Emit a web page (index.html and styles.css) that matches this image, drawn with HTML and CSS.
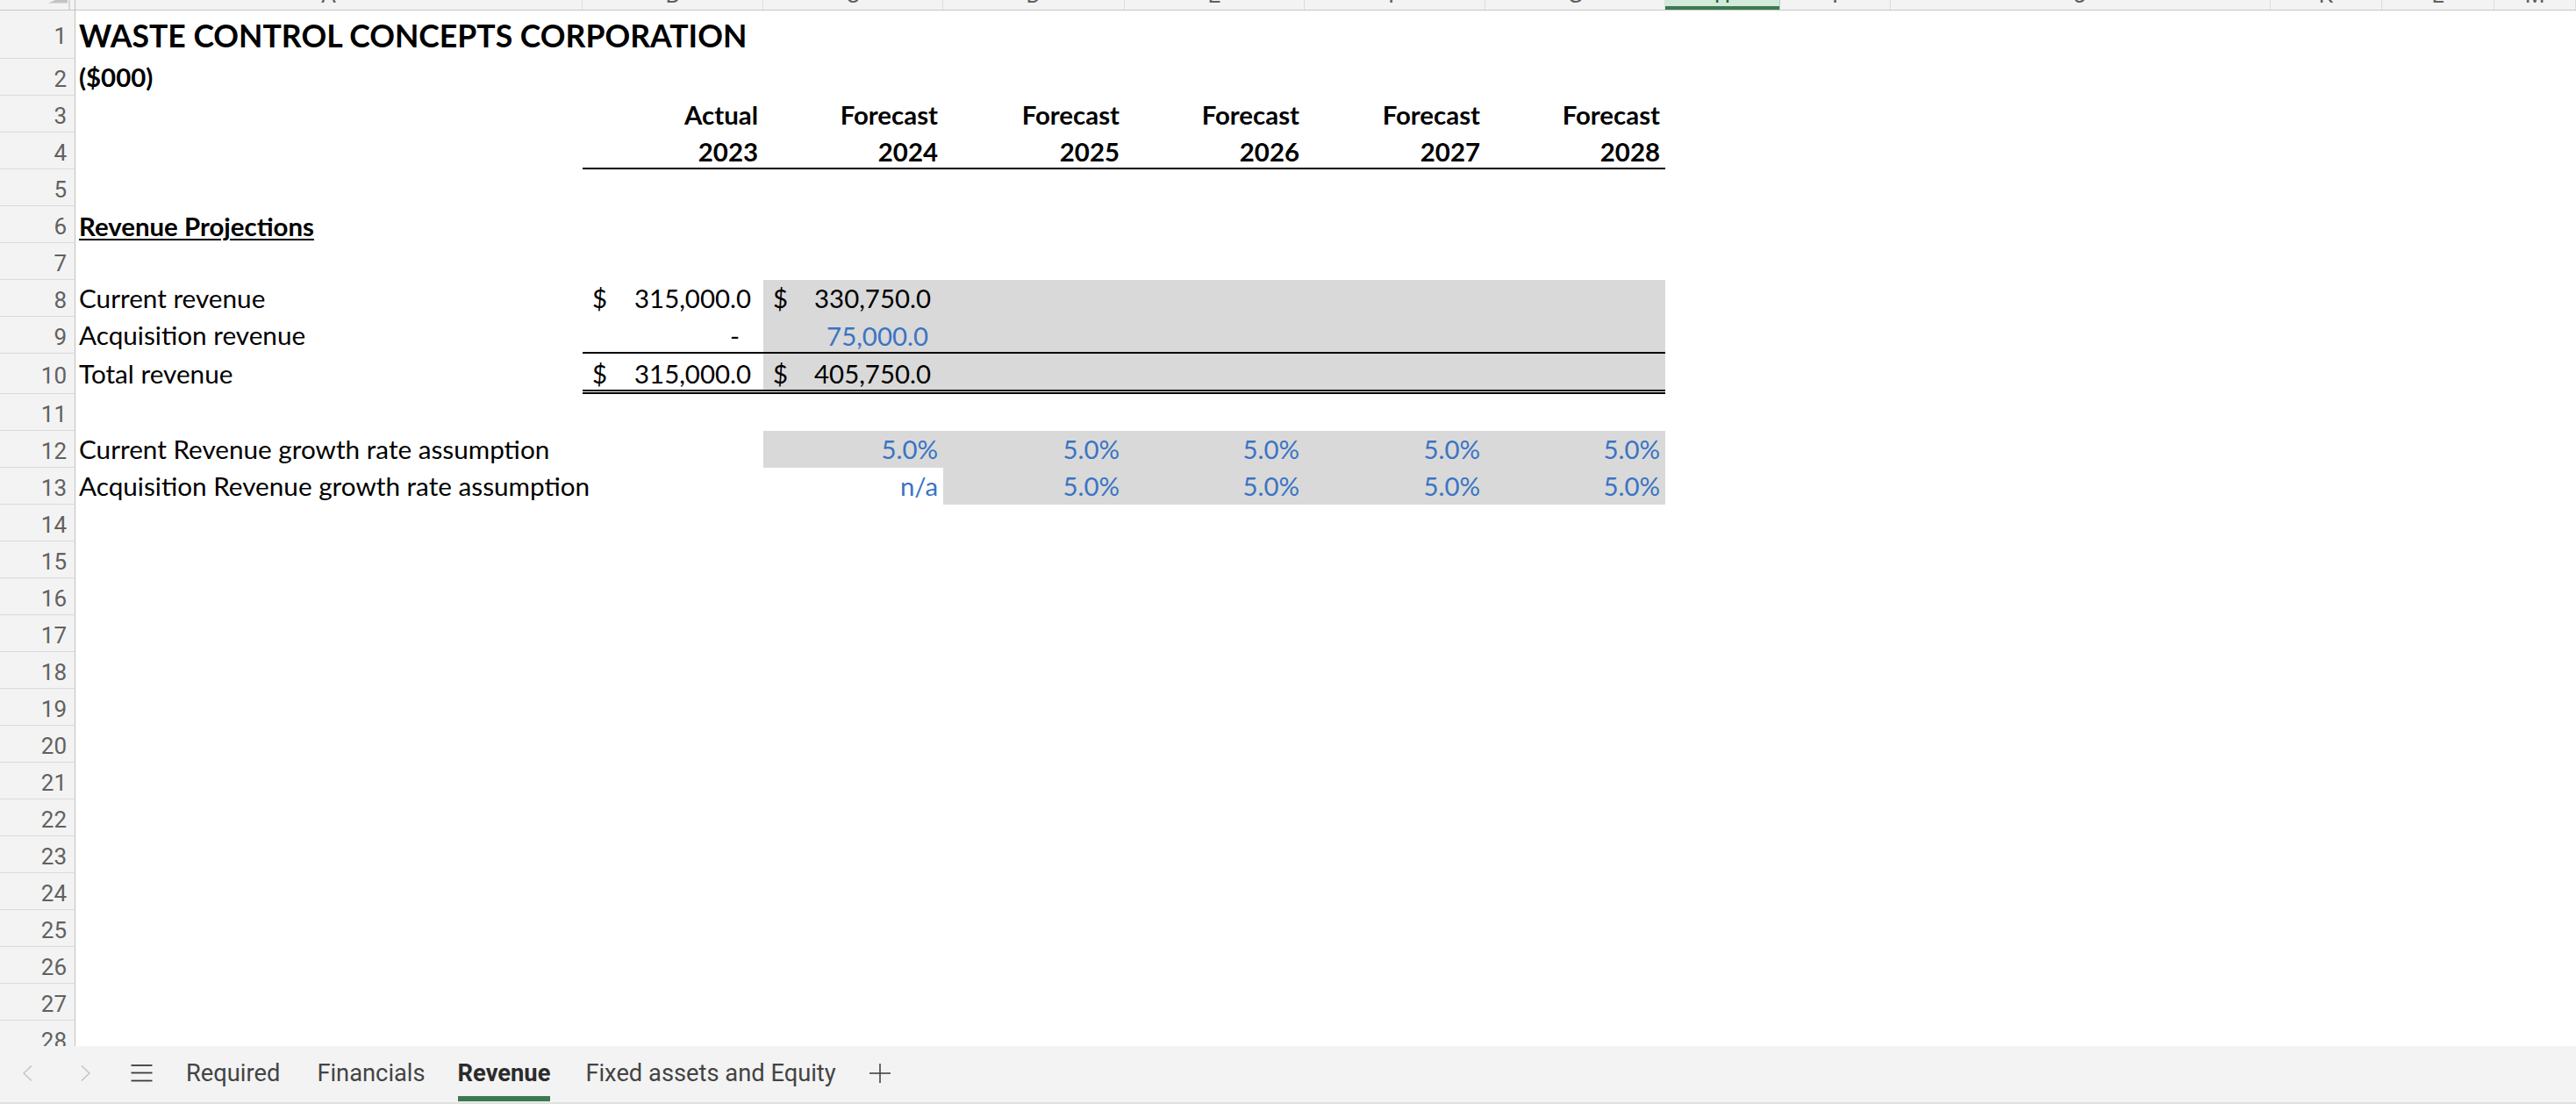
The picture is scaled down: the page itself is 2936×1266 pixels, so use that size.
FILE: index.html
```html
<!DOCTYPE html>
<html>
<head>
<meta charset="utf-8">
<title>Revenue</title>
<link rel="stylesheet" href="styles.css">
</head>
<body>
<div class="app">
  <div class="colhdr">
    <div class="corner"><svg width="86" height="11" viewBox="0 0 86 11"><polygon points="63,0 77,0 77,3.5 55,3.5" fill="#c4c4c4"/><rect x="78" y="0" width="2" height="11" fill="#d6d6d6"/></svg></div>
    <div class="h"><span>A</span></div>
    <div class="h"><span>B</span></div>
    <div class="h"><span>C</span></div>
    <div class="h"><span>D</span></div>
    <div class="h"><span>E</span></div>
    <div class="h"><span>F</span></div>
    <div class="h"><span>G</span></div>
    <div class="h sel"><span>H</span></div>
    <div class="h"><span>I</span></div>
    <div class="h"><span>J</span></div>
    <div class="h"><span>K</span></div>
    <div class="h"><span>L</span></div>
    <div class="h"><span>M</span></div>
  </div>

  <div class="sheet">
    <div class="row h55"><div class="rh">1</div><div class="c title">WASTE CONTROL CONCEPTS CORPORATION</div></div>
    <div class="row"><div class="rh">2</div><div class="c bold">($000)</div></div>
    <div class="row"><div class="rh">3</div><div class="c"></div>
      <div class="c r bold hd">Actual</div><div class="c r bold hd">Forecast</div><div class="c r bold hd">Forecast</div><div class="c r bold hd">Forecast</div><div class="c r bold hd">Forecast</div><div class="c r bold hd">Forecast</div></div>
    <div class="row"><div class="rh">4</div><div class="c"></div>
      <div class="c r bold ul2">2023</div><div class="c r bold ul2">2024</div><div class="c r bold ul2">2025</div><div class="c r bold ul2">2026</div><div class="c r bold ul2">2027</div><div class="c r bold ul2">2028</div></div>
    <div class="row"><div class="rh">5</div></div>
    <div class="row"><div class="rh">6</div><div class="c bold under">Revenue Projections</div></div>
    <div class="row"><div class="rh">7</div></div>
    <div class="row"><div class="rh">8</div><div class="c">Current revenue</div>
      <div class="c acct"><span>$</span><span>315,000.0</span></div>
      <div class="c acct fill"><span>$</span><span>330,750.0</span></div>
      <div class="c fill"></div><div class="c fill"></div><div class="c fill"></div><div class="c fill"></div></div>
    <div class="row"><div class="rh">9</div><div class="c">Acquisition revenue</div>
      <div class="c r ul2 dash">-</div>
      <div class="c r ul2 fill blue inp">75,000.0</div>
      <div class="c ul2 fill"></div><div class="c ul2 fill"></div><div class="c ul2 fill"></div><div class="c ul2 fill"></div></div>
    <div class="row h46"><div class="rh">10</div><div class="c tot">Total revenue</div>
      <div class="c acct dbl"><span>$</span><span>315,000.0</span></div>
      <div class="c acct dbl fill"><span>$</span><span>405,750.0</span></div>
      <div class="c dbl fill"></div><div class="c dbl fill"></div><div class="c dbl fill"></div><div class="c dbl fill"></div></div>
    <div class="row"><div class="rh">11</div></div>
    <div class="row"><div class="rh">12</div><div class="c lo">Current Revenue growth rate assumption</div><div class="c"></div>
      <div class="c r lo fill blue">5.0%</div><div class="c r lo fill blue">5.0%</div><div class="c r lo fill blue">5.0%</div><div class="c r lo fill blue">5.0%</div><div class="c r lo fill blue">5.0%</div></div>
    <div class="row"><div class="rh">13</div><div class="c lo">Acquisition Revenue growth rate assumption</div><div class="c"></div>
      <div class="c r lo blue">n/a</div><div class="c r lo fill blue">5.0%</div><div class="c r lo fill blue">5.0%</div><div class="c r lo fill blue">5.0%</div><div class="c r lo fill blue">5.0%</div></div>
    <div class="row"><div class="rh">14</div></div>
    <div class="row"><div class="rh">15</div></div>
    <div class="row"><div class="rh">16</div></div>
    <div class="row"><div class="rh">17</div></div>
    <div class="row"><div class="rh">18</div></div>
    <div class="row"><div class="rh">19</div></div>
    <div class="row"><div class="rh">20</div></div>
    <div class="row"><div class="rh">21</div></div>
    <div class="row"><div class="rh">22</div></div>
    <div class="row"><div class="rh">23</div></div>
    <div class="row"><div class="rh">24</div></div>
    <div class="row"><div class="rh">25</div></div>
    <div class="row"><div class="rh">26</div></div>
    <div class="row"><div class="rh">27</div></div>
    <div class="row"><div class="rh">28</div></div>
  </div>

  <div class="tabbar">
    <svg class="chev" width="11" height="18" viewBox="0 0 11 18"><polyline points="10,0.5 1,9 10,17.5" fill="none" stroke="#c2c2c2" stroke-width="1.4"/></svg>
    <svg class="chev next" width="11" height="18" viewBox="0 0 11 18"><polyline points="1,0.5 10,9 1,17.5" fill="none" stroke="#c2c2c2" stroke-width="1.4"/></svg>
    <svg class="menu" width="25" height="20" viewBox="0 0 25 20"><line x1="0.5" y1="1" x2="24.5" y2="1" stroke="#3a3a3a" stroke-width="1.8"/><line x1="0.5" y1="9.5" x2="24.5" y2="9.5" stroke="#3a3a3a" stroke-width="1.8"/><line x1="0.5" y1="18.5" x2="24.5" y2="18.5" stroke="#3a3a3a" stroke-width="1.8"/></svg>
    <div class="tab">Required</div>
    <div class="tab">Financials</div>
    <div class="tab active">Revenue</div>
    <div class="tab">Fixed assets and Equity</div>
    <svg class="plus" width="26" height="24" viewBox="0 0 26 24"><line x1="13" y1="1" x2="13" y2="23" stroke="#444" stroke-width="1.6"/><line x1="1" y1="12" x2="25" y2="12" stroke="#444" stroke-width="1.6"/></svg>
  </div>
</div>
</body>
</html>
```

FILE: styles.css
```css
* { box-sizing: border-box; }
html, body { margin: 0; padding: 0; }
body {
  width: 2936px;
  height: 1266px;
  overflow: hidden;
  background: #ffffff;
  font-family: Lato, "Liberation Sans", sans-serif;
}
.app { width: 2936px; height: 1266px; display: flex; flex-direction: column; }

/* column header strip (mostly scrolled out of view) */
.colhdr {
  display: grid;
  grid-template-columns: 86px 578px 206px 205px 207px 205px 206px 205px 131px 126px 433px 127px 128px 1fr;
  height: 12px;
  flex: none;
  background: #f3f3f3;
  border-bottom: 1px solid #c6c6c6;
}
.corner { overflow: hidden; border-right: 1px solid #bfbfbf; }
.corner svg { display: block; }
.colhdr .h {
  overflow: hidden;
  display: flex;
  align-items: flex-end;
  justify-content: center;
  border-right: 1px solid #dcdcdc;
  font-family: Roboto, "Liberation Sans", sans-serif;
  font-size: 26px;
  color: #616161;
}
.colhdr .h span { line-height: 26px; margin-bottom: 4px; }
.colhdr .h.sel {
  background: #d3eadb;
  color: #1f6b3c;
  border-right-color: #a9d3b6;
  box-shadow: inset 0 -4px 0 #3b7a50;
}

/* sheet */
.sheet { height: 1180px; flex: none; overflow: hidden; }
.row {
  display: grid;
  grid-template-columns: 86px 578px 206px 205px 207px 205px 206px 205px;
  height: 42px;
}
.row.h55 { height: 55px; }
.row.h46 { height: 46px; }

.rh {
  background: #f3f3f3;
  border-right: 1px solid #bfbfbf;
  border-bottom: 1px solid #dadada;
  display: flex;
  align-items: center;
  justify-content: flex-end;
  padding: 4px 9px 0 0;
  font-family: Roboto, "Liberation Sans", sans-serif;
  font-size: 26px;
  color: #616161;
}

.c {
  display: flex;
  align-items: flex-end;
  padding: 0 6px 6px 4px;
  font-size: 29.7px;
  line-height: 30px;
  white-space: nowrap;
  color: #000000;
  min-width: 0;
}
.c.r { justify-content: flex-end; }
.c.bold { font-weight: 700; font-size: 29.4px; }
.c.hd { padding-bottom: 5px; }
.c.lo { padding-bottom: 6px; }
.c.title { font-size: 35.6px; line-height: 40px; font-weight: 700; padding-bottom: 6px; }
.c.under { text-decoration: underline; text-decoration-thickness: 2px; text-underline-offset: 3px; padding-bottom: 4px; }
.c.tot { padding-bottom: 8px; }
.c.acct span, .c.inp, .c.r.lo { font-size: 29.4px; }

.fill { background: #d9d9d9; }
.blue { color: #3a74c4; }
.ul2 { border-bottom: 2px solid #000000; padding-bottom: 3px; }
.c.r.ul2 { padding-bottom: 3px; }
.dbl { border-bottom: 5px double #000000; background-clip: padding-box; }
.c.acct { justify-content: space-between; padding-left: 11px; padding-right: 14px; }
.c.acct.dbl { padding-bottom: 3px; }
.c.dash { padding-right: 27px; }
.c.inp { padding-right: 17px; }

/* sheet tabs */
.tabbar {
  height: 66px;
  flex: none;
  background: #f3f3f3;
  border-bottom: 2px solid #e0e0e0;
  display: flex;
  align-items: center;
  padding: 0 0 2px 26px;
  font-family: Roboto, "Liberation Sans", sans-serif;
  font-size: 27.3px;
  color: #444444;
}
.chev { display: block; flex: none; }
.chev.next { margin-left: 55px; }
.menu { display: block; flex: none; margin-left: 46px; margin-right: 17px; }
.tab {
  height: 64px;
  display: flex;
  align-items: center;
  padding: 0 21px;
  white-space: nowrap;
}
.tab.active {
  padding: 0;
  margin: 0 20px 0 16px;
  font-weight: 700;
  color: #2b2b2b;
  box-shadow: inset 0 -6px 0 #3b7a50;
}
.tab.active + .tab { padding-left: 20px; }
.plus { display: block; flex: none; margin-left: 16px; }
```
